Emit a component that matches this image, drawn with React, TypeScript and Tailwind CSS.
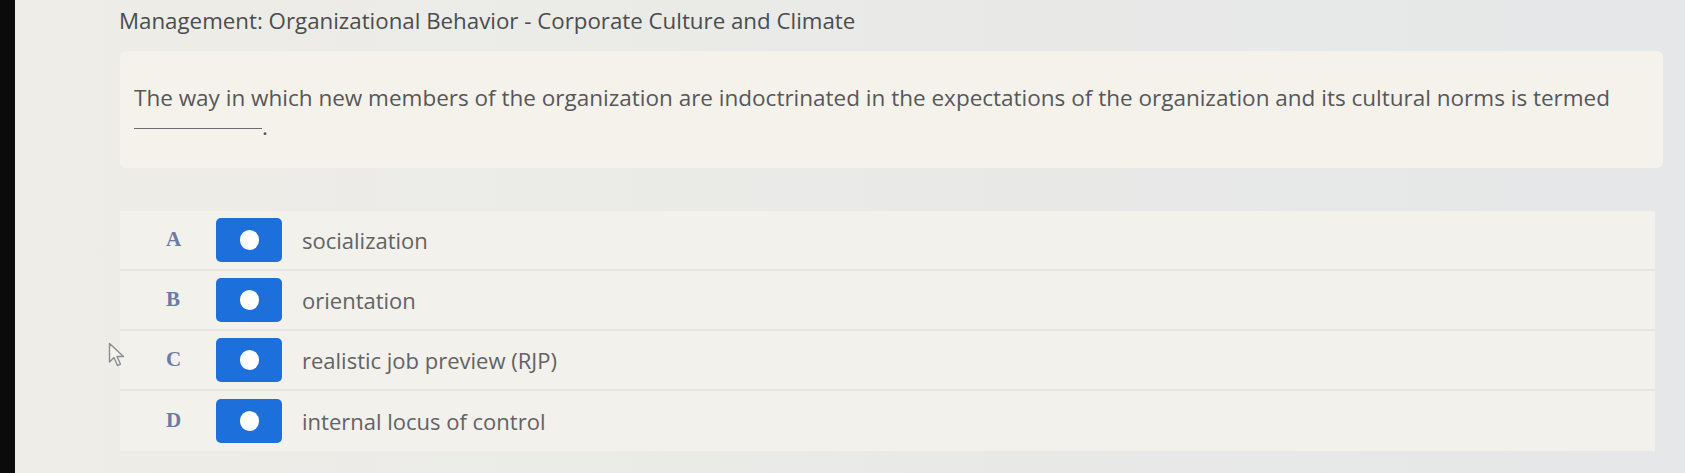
import React from 'react'

const options = [
  { letter: 'A', text: 'socialization' },
  { letter: 'B', text: 'orientation' },
  { letter: 'C', text: 'realistic job preview (RJP)' },
  { letter: 'D', text: 'internal locus of control' },
]

function Cursor() {
  return (
    <svg
      className="absolute left-[108px] top-[342px]"
      width="18"
      height="26"
      viewBox="0 0 18 26"
    >
      <path
        d="M1.5 1.5 L1.5 20 L6 15.5 L9.5 23.5 L12.5 22.2 L9 14.5 L15.5 14.5 Z"
        fill="#f4f3ee"
        stroke="#8a8d92"
        strokeWidth="1.4"
        strokeLinejoin="round"
      />
    </svg>
  )
}

export default function App() {
  return (
    <div className="relative flex w-[1685px] h-[473px] overflow-hidden bg-linear-to-r from-[#eeede7] to-[#e5e7e8] font-['Open_Sans',sans-serif]">
      <div className="w-[15px] shrink-0 bg-[#0b0b0b]" />

      <main className="flex-1 pl-[104px] pr-[22px]">
        <h1 className="pt-[6px] h-[51px] text-[22.3px] leading-[30px] text-[#4b4c4f]">
          Management: Organizational Behavior - Corporate Culture and Climate
        </h1>

        <div className="ml-[1px] h-[117px] rounded-md bg-[#f4f2eb] px-[14px] pt-[32px] text-[22.5px] leading-[29px] text-[#56575a]">
          <p>
            The way in which new members of the organization are indoctrinated in the expectations of the organization and its cultural norms is termed
          </p>
          <p>
            <span className="inline-block w-[128px] border-b border-[#6b6c6f] align-middle" />.
          </p>
        </div>

        <div className="mt-[43px] ml-[1px] mr-[8px] bg-[#f2f1eb]">
          {options.map((o) => (
            <div
              key={o.letter}
              className="flex h-[60px] items-center border-b-2 border-[#e6e6e1] last:border-b-0"
            >
              <span className="w-[96px] pl-[46px] font-['Liberation_Serif',serif] text-[21px] font-bold text-[#6b7aa6]">
                {o.letter}
              </span>
              <button className="flex h-[44px] w-[66px] items-center justify-center rounded-[5px] bg-[#1d6fdc]">
                <span className="h-[20px] w-[19px] rounded-full bg-white" />
              </button>
              <span className="pl-[20px] text-[22px] text-[#626366]">{o.text}</span>
            </div>
          ))}
        </div>
      </main>

      <Cursor />
    </div>
  )
}
